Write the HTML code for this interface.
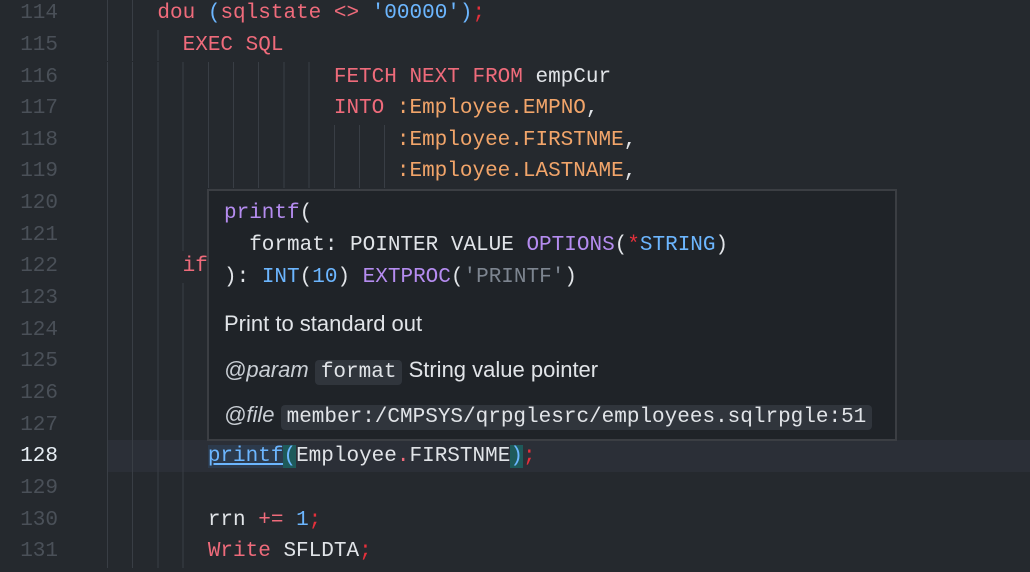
<!DOCTYPE html>
<html><head><style>
body{margin:0;width:1030px;height:570px;overflow:hidden;background:#25292e;position:relative;font-family:"Liberation Mono",monospace;font-size:21px}
#w{position:absolute;left:0;top:2px;width:1030px;height:570px}
.ln{position:absolute;left:0;width:58px;text-align:right;color:#4a5058;height:31.65px;line-height:31.65px}
.cl{position:absolute;left:107px;white-space:pre;height:31.65px;line-height:31.65px;color:#e1e4e8}
.g{position:absolute;left:107px;height:31.65px;background:repeating-linear-gradient(to right,#393e45 0 1px,transparent 1px 25.2px)}
.k{color:#ef6b7b}.o{color:#f2a56a}.b{color:#6cb6ff}.p{color:#b58cf0}.s{color:#7d8590}.r{color:#e5303b}
.pop{position:absolute;left:207px;top:187px;width:686px;height:248px;background:#1f2328;border:2px solid #3b3e43}
.pc{position:absolute;left:15px;white-space:pre;color:#e1e4e8;line-height:32px}
.t{position:absolute;left:15px;font-family:"Liberation Sans",sans-serif;font-size:22px;color:#e1e4e8;white-space:pre}
.chip{background:#30353c;border-radius:4px;padding:1px 6px;font-family:"Liberation Mono",monospace;font-size:21px}
i{color:#c9ced4}
</style></head><body><div id="w">
<div style="position:absolute;left:107px;right:0;top:438px;height:31.5px;background:#2b2f37"></div>
<div class="ln" style="top:-3.8px">114</div>
<div class="ln" style="top:27.8px">115</div>
<div class="ln" style="top:59.5px">116</div>
<div class="ln" style="top:91.1px">117</div>
<div class="ln" style="top:122.8px">118</div>
<div class="ln" style="top:154.4px">119</div>
<div class="ln" style="top:186.1px">120</div>
<div class="ln" style="top:217.7px">121</div>
<div class="ln" style="top:249.4px">122</div>
<div class="ln" style="top:281px">123</div>
<div class="ln" style="top:312.7px">124</div>
<div class="ln" style="top:344.3px">125</div>
<div class="ln" style="top:376px">126</div>
<div class="ln" style="top:407.6px">127</div>
<div class="ln" style="top:439.3px;color:#e6edf3">128</div>
<div class="ln" style="top:470.9px">129</div>
<div class="ln" style="top:502.6px">130</div>
<div class="ln" style="top:534.2px">131</div>

<div class="g" style="top:-3.8px;width:27px"></div>
<div class="g" style="top:27.8px;width:52px"></div>
<div class="g" style="top:59.5px;width:203px"></div>
<div class="g" style="top:91.1px;width:203px"></div>
<div class="g" style="top:122.8px;width:279px"></div>
<div class="g" style="top:154.4px;width:279px"></div>
<div class="g" style="top:186.1px;width:77px"></div>
<div class="g" style="top:217.7px;width:77px"></div>
<div class="g" style="top:249.4px;width:52px"></div>
<div class="g" style="top:281px;width:77px"></div>
<div class="g" style="top:312.7px;width:77px"></div>
<div class="g" style="top:344.3px;width:77px"></div>
<div class="g" style="top:376px;width:77px"></div>
<div class="g" style="top:407.6px;width:77px"></div>
<div class="g" style="top:439.3px;width:77px"></div>
<div class="g" style="top:470.9px;width:77px"></div>
<div class="g" style="top:502.6px;width:77px"></div>
<div class="g" style="top:534.2px;width:77px"></div>

<div class="cl" style="top:-3.8px">    <span class="k">dou</span> <span class="b">(</span><span class="k">sqlstate &lt;&gt; </span><span class="b">'00000')</span><span class="r">;</span></div>
<div class="cl" style="top:27.8px">      <span class="k">EXEC SQL</span></div>
<div class="cl" style="top:59.5px">                  <span class="k">FETCH NEXT FROM</span> empCur</div>
<div class="cl" style="top:91.1px">                  <span class="k">INTO</span> <span class="o">:Employee.EMPNO</span>,</div>
<div class="cl" style="top:122.8px">                       <span class="o">:Employee.FIRSTNME</span>,</div>
<div class="cl" style="top:154.4px">                       <span class="o">:Employee.LASTNAME</span>,</div>
<div class="cl" style="top:249.4px">      <span class="k">if</span></div>
<div class="cl" style="top:439.3px">        <span class="b" style="text-decoration:underline;background:#2c3a4c">printf</span><span class="b" style="background:#1e5a5a">(</span>Employee<span class="k">.</span>FIRSTNME<span class="b" style="background:#1e5a5a">)</span><span class="r">;</span></div>
<div class="cl" style="top:502.6px">        rrn <span class="k">+=</span> <span class="b">1</span><span class="r">;</span></div>
<div class="cl" style="top:534.2px">        <span class="k">Write</span> SFLDTA<span class="r">;</span></div>

<div class="pop">
<div class="pc" style="top:7px"><span class="p">printf</span>(</div>
<div class="pc" style="top:39px">  format: POINTER VALUE <span class="p">OPTIONS</span>(<span class="r">*</span><span class="b">STRING</span>)</div>
<div class="pc" style="top:71px">): <span class="b">INT</span>(<span class="b">10</span>) <span class="p">EXTPROC</span>(<span class="s">'PRINTF'</span>)</div>
<div class="t" style="top:120px">Print to standard out</div>
<div class="t" style="top:166px"><i>@param</i> <span class="chip">format</span> String value pointer</div>
<div class="t" style="top:211px"><i>@file</i> <span class="chip">member:/CMPSYS/qrpglesrc/employees.sqlrpgle:51</span></div>
</div>
</div></body></html>
